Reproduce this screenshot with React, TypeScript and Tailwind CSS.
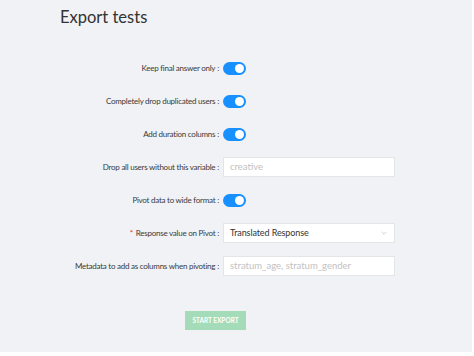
import React from "react";

function Toggle() {
  return (
    <div className="relative h-[13px] w-[23px] rounded-full bg-[#1890ff]">
      <div className="absolute right-[2px] top-[2px] h-[9px] w-[9px] rounded-full bg-white" />
    </div>
  );
}

function Row({ label, required, children }: { label: string; required?: boolean; children: React.ReactNode }) {
  return (
    <div className="flex h-[20px] items-center">
      <div className="w-[220px] shrink-0 pr-[1px] text-right text-[8px] tracking-[-0.25px] text-[#3a3a3a]">
        {required && <span className="mr-[3px] text-[#f5222d]">*</span>}
        {label}
        <span className="ml-[2px]">:</span>
      </div>
      <div className="ml-[3px] flex items-center">{children}</div>
    </div>
  );
}

function Input({ placeholder }: { placeholder: string }) {
  return (
    <div className="flex h-[20px] w-[172px] items-center border border-[#e3e5e8] bg-white px-[6px] text-[9.5px] text-[#c2c2c2]">
      {placeholder}
    </div>
  );
}

export default function App() {
  return (
    <div className="h-[356px] w-[474px] bg-white font-['Lato',sans-serif]">
      <div className="h-[352px] w-[472px] bg-[#f0f2f5] pt-[7px]">
        <h1 className="pl-[60px] text-[16.5px] leading-[20px] text-[#333]">Export tests</h1>
        <div className="mt-[31px] flex flex-col gap-[13px]">
          <Row label="Keep final answer only">
            <Toggle />
          </Row>
          <Row label="Completely drop duplicated users">
            <Toggle />
          </Row>
          <Row label="Add duration columns">
            <Toggle />
          </Row>
          <Row label="Drop all users without this variable">
            <Input placeholder="creative" />
          </Row>
          <Row label="Pivot data to wide format">
            <Toggle />
          </Row>
          <Row label="Response value on Pivot" required>
            <div className="flex h-[20px] w-[172px] items-center justify-between border border-[#e3e5e8] bg-white pl-[6px] pr-[6px] text-[9px] tracking-[-0.1px] text-[#333]">
              <span>Translated Response</span>
              <svg width="8" height="8" viewBox="0 0 10 10" fill="none" stroke="#c4c4c4" strokeWidth="1">
                <path d="M2 3.5 5 6.5 8 3.5" />
              </svg>
            </div>
          </Row>
          <Row label="Metadata to add as columns when pivoting">
            <Input placeholder="stratum_age, stratum_gender" />
          </Row>
        </div>
        <button className="ml-[185px] mt-[35px] flex h-[19px] w-[61px] items-center justify-center bg-[#a4dcb9] text-[6.5px] font-bold uppercase text-white">
          Start export
        </button>
      </div>
    </div>
  );
}
